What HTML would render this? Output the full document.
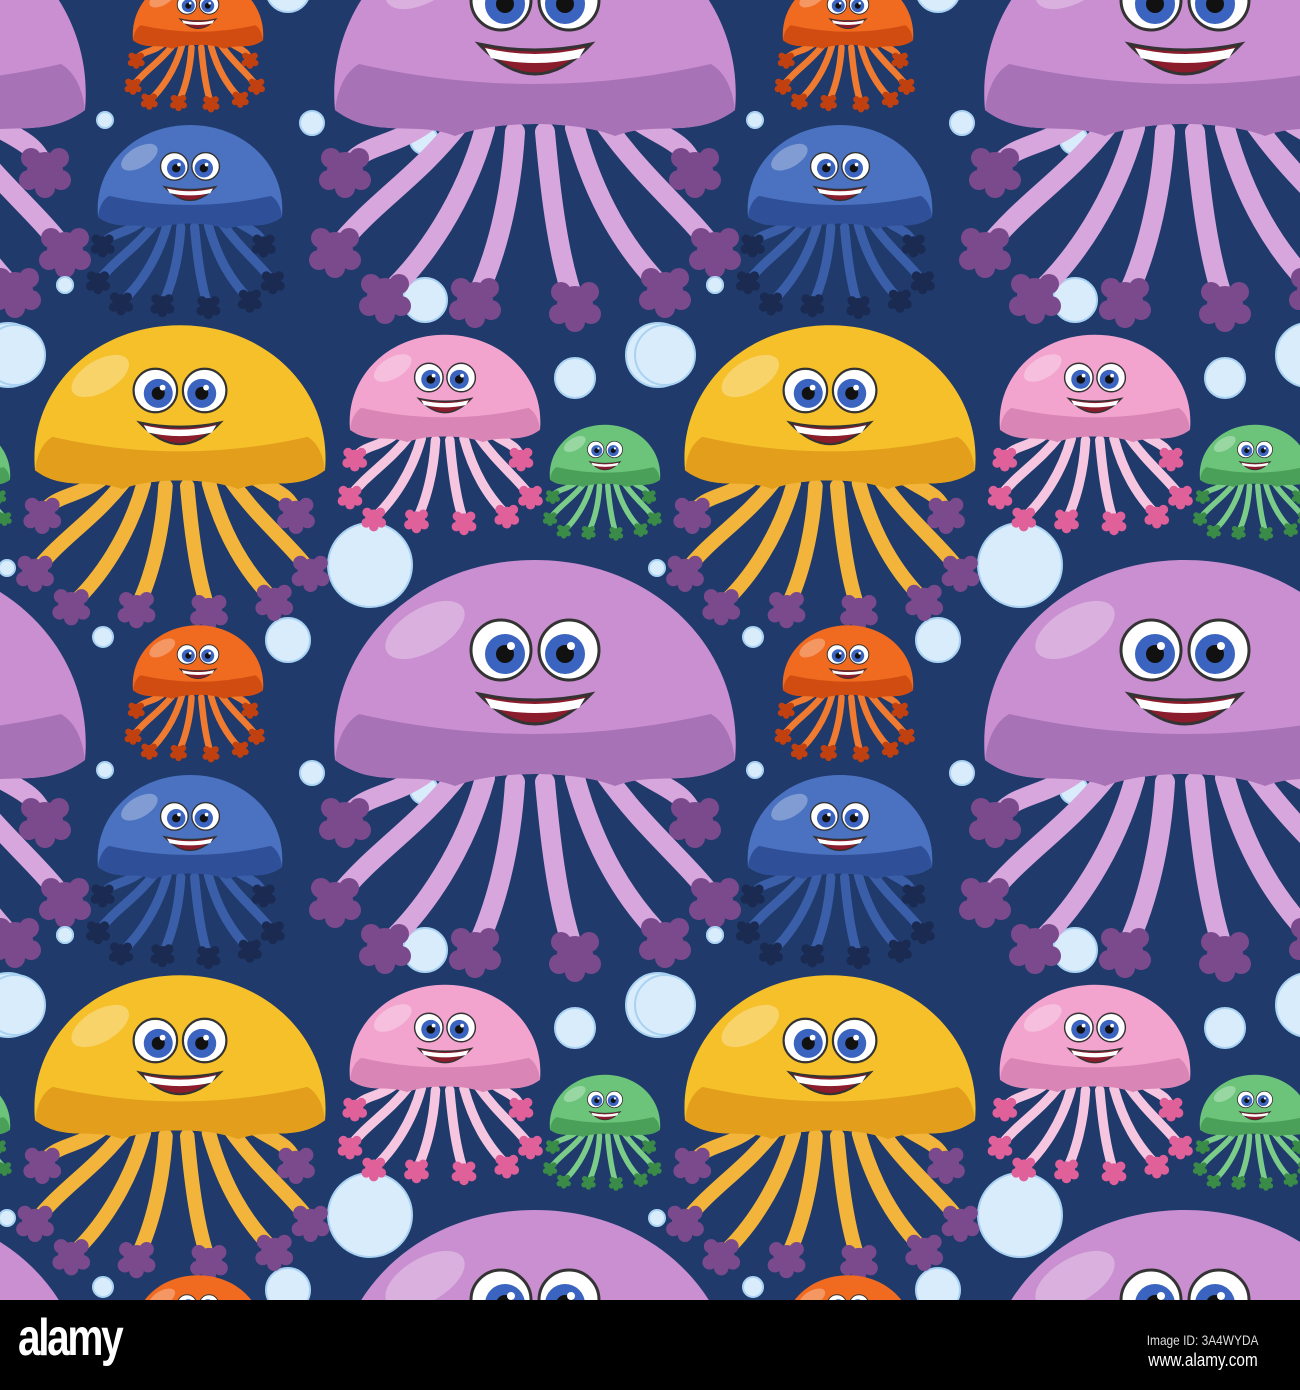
<!DOCTYPE html>
<html><head><meta charset="utf-8"><style>
html,body{margin:0;padding:0;width:1300px;height:1390px;overflow:hidden;background:#000}
svg{display:block;overflow:hidden}
.bar{position:absolute;left:0;top:1300px;width:1300px;height:90px;background:#000;color:#fff;font-family:"Liberation Sans",sans-serif;overflow:hidden}
.logo{position:absolute;left:18px;top:8px;font-size:52px;font-weight:bold;letter-spacing:-3px;transform:scaleX(.78);transform-origin:left;line-height:60px}
.id{position:absolute;right:42px;top:32px;font-size:14px;color:#ddd;transform:scaleX(.85);transform-origin:right;line-height:16px}
.www{position:absolute;right:42px;top:50px;font-size:18px;transform:scaleX(.85);transform-origin:right;line-height:20px}
</style></head><body>
<svg width="1300" height="1300" viewBox="0 0 1300 1300">
<defs>
<symbol id="j" overflow="visible">
 <g fill="none" style="stroke:var(--t)" stroke-width="10" stroke-linecap="round">
  <path d="M-50,28 C-70,45 -85,40 -95,55"/>
  <path d="M-38,32 C-60,60 -80,70 -100,95"/>
  <path d="M-25,34 C-35,70 -55,100 -75,118"/>
  <path d="M-10,36 C-12,70 -20,100 -30,120"/>
  <path d="M5,36 C8,70 12,100 20,122"/>
  <path d="M20,34 C30,70 45,95 65,115"/>
  <path d="M35,32 C55,60 75,75 90,95"/>
  <path d="M48,28 C65,40 75,40 80,55"/>
 </g>
 <g style="fill:var(--f)">
  <g id="fl"><circle r="9"/><circle cx="-7" cy="-6" r="5"/><circle cx="7" cy="-6" r="5"/><circle cx="-8" cy="5" r="5"/><circle cx="8" cy="5" r="5"/><circle cy="9" r="5"/></g>
  <use href="#fl" x="-95" y="55"/><use href="#fl" x="-100" y="95"/><use href="#fl" x="-75" y="118"/><use href="#fl" x="-30" y="120"/>
  <use href="#fl" x="20" y="122"/><use href="#fl" x="65" y="115"/><use href="#fl" x="90" y="95"/><use href="#fl" x="80" y="55"/>
 </g>
 <path d="M-100,25 C-105,-30 -60,-75 0,-75 C60,-75 105,-30 100,25 C80,40 60,30 40,38 C20,30 -20,30 -40,38 C-60,30 -80,40 -100,25Z" style="fill:var(--b)"/>
 <path d="M-100,25 C-80,40 -60,30 -40,38 C-20,30 20,30 40,38 C60,30 80,40 100,25 Q98,8 88,2 Q0,22 -88,2 Q-98,8 -100,25Z" style="fill:var(--d)"/>
 <ellipse cx="-55" cy="-40" rx="22" ry="11" fill="#fff" opacity=".3" transform="rotate(-30 -55 -40)"/>
 <circle cx="-17" cy="-30" r="15" fill="#fff" stroke="#333" stroke-width="1.5"/>
 <circle cx="17" cy="-30" r="15" fill="#fff" stroke="#333" stroke-width="1.5"/>
 <circle cx="-15" cy="-28" r="10" fill="#3a64c0"/><circle cx="15" cy="-28" r="10" fill="#3a64c0"/>
 <circle cx="-15" cy="-28" r="4.5" fill="#111"/><circle cx="15" cy="-28" r="4.5" fill="#111"/>
 <circle cx="-12" cy="-32" r="2" fill="#fff"/><circle cx="18" cy="-32" r="2" fill="#fff"/>
 <path d="M-28,-8 Q0,22 28,-8 Q0,-2 -28,-8Z" fill="#8a1c2c" stroke="#333" stroke-width="1.5"/>
 <path d="M-25,-6 Q0,0 25,-6 L22,-1 Q0,4 -22,-1Z" fill="#fff"/>
</symbol>
<g id="T">
 <g fill="#d8ecfb" stroke="#a9d2f2" stroke-width="2">
  <circle cx="370" cy="565" r="42"/><circle cx="658" cy="355" r="32"/><circle cx="575" cy="378" r="20"/>
  <circle cx="15" cy="355" r="30"/><circle cx="288" cy="640" r="22"/><circle cx="103" cy="637" r="10"/>
  <circle cx="312" cy="773" r="12"/><circle cx="425" cy="950" r="22"/><circle cx="65" cy="935" r="8"/>
  <circle cx="7" cy="568" r="8"/>
  <circle cx="105" cy="770" r="8"/><circle cx="424" cy="790" r="14"/><circle cx="715" cy="935" r="8"/>
 </g>
 <use href="#j" transform="translate(180,434) scale(1.45)" style="--b:#f5c02a;--d:#e39e1c;--t:#f2b43a;--f:#7b4a8c"/>
 <use href="#j" transform="translate(445,406) scale(.95)" style="--b:#f2a4cf;--d:#d985b5;--t:#f6c6e0;--f:#e0609a"/>
 <use href="#j" transform="translate(605,466) scale(.55)" style="--b:#6cc47a;--d:#4aa058;--t:#7acc88;--f:#3a8a48"/>
 <use href="#j" transform="translate(198,674) scale(.65)" style="--b:#f06a20;--d:#d04c10;--t:#f07a30;--f:#c04010"/>
 <use href="#j" transform="translate(190,844) scale(.92)" style="--b:#4a72c0;--d:#2f4f98;--t:#3a5ea8;--f:#1a2a50"/>
 <use href="#j" transform="translate(535,710) scale(2)" style="--b:#c98fd0;--d:#a872b7;--t:#d7a6dd;--f:#7b4a8c"/>
</g>
</defs>
<rect width="1300" height="1300" fill="#1f3a6b"/>
<use href="#T" x="-650" y="-650"/><use href="#T" x="0" y="-650"/><use href="#T" x="650" y="-650"/>
<use href="#T" x="-650" y="0"/><use href="#T" x="0" y="0"/><use href="#T" x="650" y="0"/>
<use href="#T" x="-650" y="650"/><use href="#T" x="0" y="650"/><use href="#T" x="650" y="650"/>
</svg>
<div class="bar">
 <div class="logo">alamy</div>
 <div class="id">Image ID: 3A4WYDA</div>
 <div class="www">www.alamy.com</div>
</div>
</body></html>
